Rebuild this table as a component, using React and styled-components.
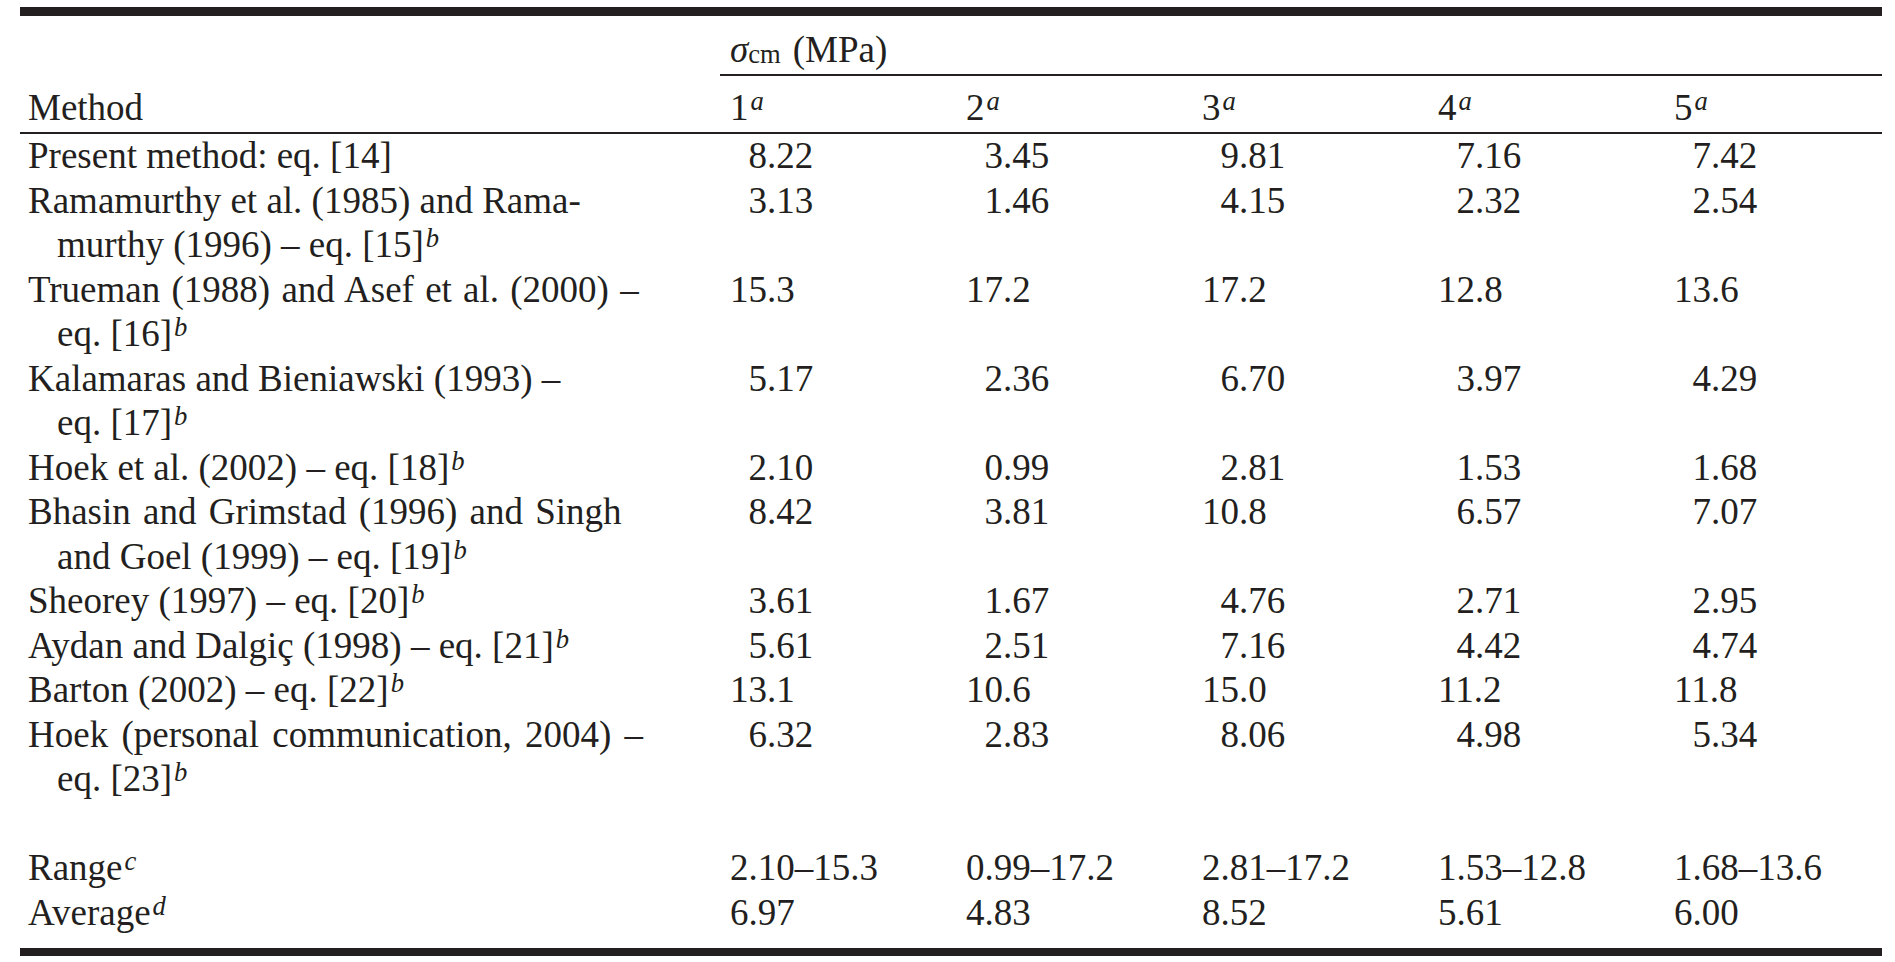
import React from 'react';
import styled, { createGlobalStyle } from 'styled-components';

// table of rock mass strength estimates

const INK = '#231f20';
const COLS = '700px repeat(4, 236px) 218px';
const LINE = 44.5;

const GlobalStyle = createGlobalStyle`
  html, body {
    margin: 0;
    padding: 0;
    background: #ffffff;
  }
  body {
    font-family: "Liberation Serif", "Times New Roman", serif;
    font-size: 37px;
    color: ${INK};
  }
`;

const Page = styled.div`
  padding: 7px 0 0 20px;
  width: 1862px;
`;

const Rule = styled.div`
  height: ${(p) => p.$h}px;
  background: ${INK};
`;

const Head = styled.div`
  display: grid;
  grid-template-columns: ${COLS};
  border-bottom: 2px solid ${INK};
`;

const GroupLabel = styled.div`
  grid-column: 2 / -1;
  padding: 12px 0 1px 10px;
  line-height: ${LINE}px;
  border-bottom: 2px solid ${INK};
`;

const HeadCell = styled.div`
  padding: 10px 0 2px ${(p) => (p.$first ? 8 : 10)}px;
  line-height: ${LINE}px;
  white-space: nowrap;
`;

const Body = styled.div`
  display: flex;
  flex-direction: column;
`;

const Row = styled.div`
  display: grid;
  grid-template-columns: ${COLS};
  line-height: ${LINE}px;
  margin-top: ${(p) => (p.$gap ? LINE : 0)}px;
`;

const MethodCell = styled.div`
  padding-left: 8px;
  white-space: nowrap;
`;

const Line = styled.div`
  padding-left: ${(p) => (p.$cont ? 29 : 0)}px;
  word-spacing: ${(p) => p.$ws || 0}px;
`;

const NumCell = styled.div`
  padding-left: ${(p) => (p.$pad ? 28.5 : 10)}px;
  white-space: nowrap;
`;

const Foot = styled.div`
  padding-bottom: 13px;
`;

const Sup = styled.sup`
  font-style: italic;
  font-size: 0.72em;
  line-height: 0;
  vertical-align: 0.36em;
  margin-left: 2px;
`;

const Sigma = styled.i`
  font-style: italic;
`;

const Sub = styled.sub`
  font-size: 0.72em;
  line-height: 0;
  vertical-align: -0.05em;
  margin-right: 12px;
`;

const rows = [
  { lines: ['Present method: eq. [14]'], vals: ['8.22', '3.45', '9.81', '7.16', '7.42'] },
  { lines: ['Ramamurthy et al. (1985) and Rama-', 'murthy (1996) – eq. [15]'], note: 'b', vals: ['3.13', '1.46', '4.15', '2.32', '2.54'] },
  { lines: ['Trueman (1988) and Asef et al. (2000) –', 'eq. [16]'], note: 'b', ws: [2, 0], vals: ['15.3', '17.2', '17.2', '12.8', '13.6'] },
  { lines: ['Kalamaras and Bieniawski (1993) –', 'eq. [17]'], note: 'b', vals: ['5.17', '2.36', '6.70', '3.97', '4.29'] },
  { lines: ['Hoek et al. (2002) – eq. [18]'], note: 'b', vals: ['2.10', '0.99', '2.81', '1.53', '1.68'] },
  { lines: ['Bhasin and Grimstad (1996) and Singh', 'and Goel (1999) – eq. [19]'], note: 'b', ws: [3, 0], vals: ['8.42', '3.81', '10.8', '6.57', '7.07'] },
  { lines: ['Sheorey (1997) – eq. [20]'], note: 'b', vals: ['3.61', '1.67', '4.76', '2.71', '2.95'] },
  { lines: ['Aydan and Dalgiç (1998) – eq. [21]'], note: 'b', vals: ['5.61', '2.51', '7.16', '4.42', '4.74'] },
  { lines: ['Barton (2002) – eq. [22]'], note: 'b', vals: ['13.1', '10.6', '15.0', '11.2', '11.8'] },
  { lines: ['Hoek (personal communication, 2004) –', 'eq. [23]'], note: 'b', ws: [4, 0], vals: ['6.32', '2.83', '8.06', '4.98', '5.34'] },
];

const summary = [
  { label: 'Range', note: 'c', vals: ['2.10–15.3', '0.99–17.2', '2.81–17.2', '1.53–12.8', '1.68–13.6'] },
  { label: 'Average', note: 'd', vals: ['6.97', '4.83', '8.52', '5.61', '6.00'] },
];

function Method({ lines, note, ws = [] }) {
  const last = lines.length - 1;
  return (
    <MethodCell>
      {lines.map((text, i) => (
        <Line key={i} $cont={i > 0} $ws={ws[i]}>
          {text}
          {i === last && note ? <Sup>{note}</Sup> : null}
        </Line>
      ))}
    </MethodCell>
  );
}

function App() {
  return (
    <>
      <GlobalStyle />
      <Page>
        <Rule $h={9} />
        <Head>
          <GroupLabel>
            <Sigma>σ</Sigma>
            <Sub>cm</Sub>(MPa)
          </GroupLabel>
          <HeadCell $first>Method</HeadCell>
          {[1, 2, 3, 4, 5].map((n) => (
            <HeadCell key={n}>
              {n}
              <Sup>a</Sup>
            </HeadCell>
          ))}
        </Head>
        <Body>
          {rows.map((r, i) => (
            <Row key={i}>
              <Method lines={r.lines} note={r.note} ws={r.ws} />
              {r.vals.map((v, j) => (
                <NumCell key={j} $pad={v.split('.')[0].length === 1}>
                  {v}
                </NumCell>
              ))}
            </Row>
          ))}
          <Foot>
            {summary.map((s, i) => (
              <Row key={s.label} $gap={i === 0}>
                <MethodCell>
                  {s.label}
                  <Sup>{s.note}</Sup>
                </MethodCell>
                {s.vals.map((v, j) => (
                  <NumCell key={j}>{v}</NumCell>
                ))}
              </Row>
            ))}
          </Foot>
        </Body>
        <Rule $h={8} />
      </Page>
    </>
  );
}

export default App;
